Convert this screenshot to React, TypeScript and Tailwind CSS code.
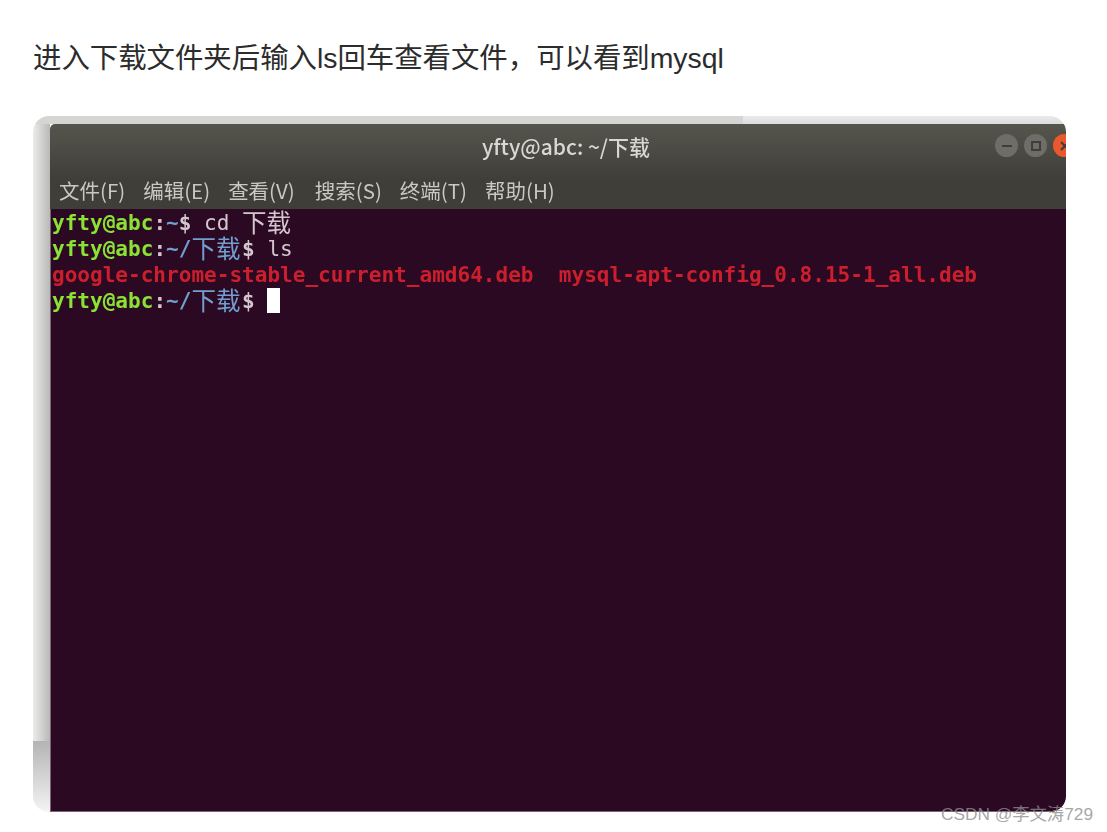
const cjk = '"Noto Sans CJK SC", sans-serif';

const menus = [
  { label: "文件(F)", left: "ml-[9px]" },
  { label: "编辑(E)", left: "ml-[18px]" },
  { label: "查看(V)", left: "ml-[18px]" },
  { label: "搜索(S)", left: "ml-[20px]" },
  { label: "终端(T)", left: "ml-[18px]" },
  { label: "帮助(H)", left: "ml-[18px]" },
];

function User() {
  return (
    <>
      <span className="text-[#8ae234]">yfty@abc</span>
      <span className="text-[#d3c7cf]">:</span>
    </>
  );
}

function Cjk({ children }: { children: string }) {
  return (
    <span className="inline-block h-[26px] w-[50.7px] align-top text-[24.5px] font-normal leading-[24px] font-['Noto_Sans_CJK_SC',sans-serif]">
      {children}
    </span>
  );
}

export default function App() {
  return (
    <div className="relative h-[832px] w-[1107px] overflow-hidden bg-white pl-[33px] pt-[38px] font-['Noto_Sans_CJK_SC',sans-serif]">
      <p className="h-[78px] text-[28.4px] leading-[40px] text-[#2c2c2c]" style={{ fontFamily: `"Liberation Sans", ${cjk}` }}>
        进入下载文件夹后输入ls回车查看文件，可以看到mysql
      </p>

      <div className="flex h-[696px] w-[1033px] flex-col overflow-hidden rounded-2xl">
        <div className="flex h-2 shrink-0">
          <div className="w-[710px] bg-[#d5d5d3]" />
          <div className="flex-1 bg-gradient-to-b from-[#eaeaea] to-[#dcdcdc]" />
        </div>

        <div className="flex min-h-0 flex-1">
          <div className="flex w-[17px] shrink-0 flex-col">
            <div className="h-[617px] bg-gradient-to-r from-[#ececec] to-[#b9b9b7]" />
            <div className="flex-1 bg-gradient-to-b from-[#b4b4b4] to-[#f4f4f4]" />
          </div>

          <div className="flex min-w-0 flex-1 flex-col overflow-hidden rounded-tl-[5px]">
            <div className="relative h-[54px] shrink-0 bg-gradient-to-b from-[#56554d] to-[#403f3a]">
              <p className="pl-[16px] pt-[8px] text-center text-[21px] font-medium leading-[28px] text-[#d8d7d2] blur-[0.5px]">
                yfty@abc: ~/下载
              </p>
              <div className="absolute right-[-10px] top-[10px] flex gap-[6px] blur-[0.5px]">
                <div className="flex size-[23px] items-center justify-center rounded-full bg-[#6e6d68]">
                  <div className="h-[2px] w-[10px] bg-[#3f3e3a]" />
                </div>
                <div className="flex size-[23px] items-center justify-center rounded-full bg-[#6e6d68]">
                  <div className="size-[10px] border-2 border-[#3f3e3a]" />
                </div>
                <div className="flex size-[23px] items-center justify-center rounded-full bg-[#e9592c]">
                  <svg viewBox="0 0 10 10" className="size-[10px]" fill="none" stroke="#3f3e3a" strokeWidth="2">
                    <path d="M1 1l8 8M9 1l-8 8" />
                  </svg>
                </div>
              </div>
            </div>

            <div className="flex h-[31px] shrink-0 items-start bg-[#3f3e39] text-[20.5px] leading-[24px] text-[#c9c8c3] blur-[0.5px]">
              {menus.map((m) => (
                <span key={m.label} className={m.left}>
                  {m.label}
                </span>
              ))}
            </div>

            <div className="flex-1 border-b border-l border-[#7a6475] bg-[#2c0922]">
              <div className="pl-[1px] pt-[1px] text-[21.05px] font-bold leading-[26px] whitespace-pre text-[#d3c7cf] blur-[0.5px] font-['DejaVu_Sans_Mono',monospace]">
                <div className="h-[26px]">
                  <User />
                  <span className="text-[#729fcf]">~</span>
                  <span>$ </span>
                  <span className="font-normal">cd </span>
                  <Cjk>下载</Cjk>
                </div>
                <div className="h-[26px]">
                  <User />
                  <span className="text-[#729fcf]">~/</span>
                  <span className="text-[#729fcf]"><Cjk>下载</Cjk></span>
                  <span>$ </span>
                  <span className="font-normal">ls</span>
                </div>
                <div className="h-[26px] text-[#cc1f2d]">
                  google-chrome-stable_current_amd64.deb  mysql-apt-config_0.8.15-1_all.deb
                </div>
                <div className="flex h-[26px] items-start">
                  <span>
                    <User />
                    <span className="text-[#729fcf]">~/</span>
                    <span className="text-[#729fcf]"><Cjk>下载</Cjk></span>
                    <span>$ </span>
                  </span>
                  <span className="h-[25px] w-[13px] bg-white" />
                </div>
              </div>
            </div>
          </div>
        </div>
      </div>

      <div className="absolute bottom-[6px] right-[14px] text-[17.3px] leading-[24px] text-[#8f8f8f]/80" style={{ fontFamily: `"Liberation Sans", ${cjk}` }}>
        CSDN @李文涛729
      </div>
    </div>
  );
}
